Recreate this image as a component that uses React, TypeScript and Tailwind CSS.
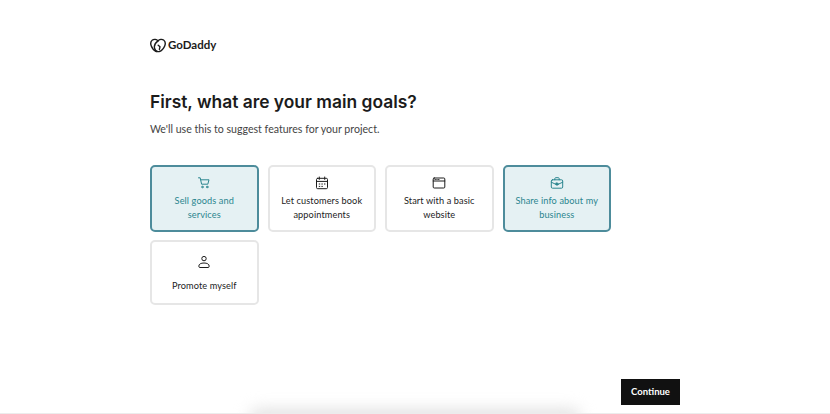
import { ReactNode } from "react";

const CartIcon = () => (
  <svg width="14" height="14" viewBox="0 0 14 14" fill="none" stroke="currentColor" strokeWidth="1" strokeLinecap="round" strokeLinejoin="round">
    <path d="M1.500 1.800h1.700l1.400 6.400h6.200l1.200-4.400H4" />
    <circle cx="5.400" cy="11" r=".8" />
    <circle cx="10.200" cy="11" r=".8" />
  </svg>
);

const CalendarIcon = () => (
  <svg width="14" height="14" viewBox="0 0 14 14" fill="none" stroke="currentColor" strokeWidth="1" strokeLinecap="round">
    <rect x="1.500" y="2.300" width="11" height="10.400" rx="1.200" />
    <path d="M1.500 5.400h11M4.300 1v2.400M9.700 1v2.400" />
    <path d="M4.200 8h.6M6.800 8h.6M9.400 8h.6M4.200 10.400h.6M6.800 10.400h.6" />
  </svg>
);

const BrowserIcon = () => (
  <svg width="14" height="14" viewBox="0 0 14 14" fill="none" stroke="currentColor" strokeWidth="1" strokeLinecap="round">
    <rect x="1.200" y="2" width="11.600" height="10" rx="1" />
    <path d="M1.200 5h11.600" />
    <path d="M3 3.500h.4M4.800 3.500h.4M6.600 3.500h.4" />
  </svg>
);

const BriefcaseIcon = () => (
  <svg width="14" height="14" viewBox="0 0 14 14" fill="none" stroke="currentColor" strokeWidth="1" strokeLinecap="round" strokeLinejoin="round">
    <rect x="1.300" y="3.800" width="11.400" height="8.400" rx="1.200" />
    <path d="M4.800 3.800V2.600c0-.5.4-.9.9-.9h2.600c.5 0 .9.4.9.9v1.200" />
    <path d="M1.300 6.200 5.600 8.200M12.700 6.200 8.400 8.200" />
    <rect x="5.800" y="7.200" width="2.400" height="1.800" rx=".4" fill="currentColor" />
  </svg>
);

const PersonIcon = () => (
  <svg width="14" height="14" viewBox="0 0 14 14" fill="none" stroke="currentColor" strokeWidth="1" strokeLinejoin="round">
    <circle cx="7" cy="3.600" r="2.200" />
    <path d="M1.800 11.200c0-2.200 2.200-3.200 5.200-3.200s5.200 1 5.200 3.200c0 .9-.5 1.300-1.200 1.300H3c-.7 0-1.200-.4-1.200-1.300Z" />
  </svg>
);

const GoDaddyMark = () => (
  <svg width="16" height="15" viewBox="0 0 16 14" fill="none" stroke="#1b1b1b" strokeWidth="1.400" strokeLinecap="round" strokeLinejoin="round">
    <path d="M8 2.400C6.600.8 4 .4 2.400 1.500.7 2.700.4 5.100 1.300 7.400c.9 2.400 2.800 4.700 5 5.600" />
    <path d="M8 2.400c1.400-1.600 4-2 5.600-.9 1.700 1.200 2 3.600 1.100 5.900-1 2.500-3.100 4.800-5.500 5.600-2.400.5-4.200-1.100-4.700-3.500C4 7.200 5.600 4.200 8 2.400Z" />
    <path d="M8.200 6.700l1.800 1.500-.6 2.600" />
  </svg>
);

function GoalCard({ icon, children, selected, single }: { icon: ReactNode; children: ReactNode; selected?: boolean; single?: boolean }) {
  return (
    <button
      className={
        selected
          ? "flex h-full flex-col items-center rounded-[5px] border-2 border-[#4d8c9b] bg-[#e5f1f3] px-2 pt-[9px] text-[#2b868f]"
          : single
            ? "flex h-full flex-col items-center rounded-[5px] border-2 border-[#e6e6e6] bg-white px-2 pt-[12.500px] text-[#1d1d1d]"
            : "flex h-full flex-col items-center rounded-[5px] border-2 border-[#e6e6e6] bg-white px-2 pt-[9px] text-[#1d1d1d]"
      }
    >
      {icon}
      <span className={single ? "mt-[10px] text-[9.200px] leading-[14px] tracking-[0.1px]" : "mt-[4px] text-[9.200px] leading-[14px] tracking-[0.1px]"}>{children}</span>
    </button>
  );
}

export default function App() {
  return (
    <div className="relative flex h-[414px] w-[830px] flex-col overflow-hidden bg-white pl-[150px] font-['Lato','Noto_Sans',sans-serif]">
      {/* Logo */}
      <div className="mt-[37px] flex h-[16px] items-center gap-[2px]">
        <GoDaddyMark />
        <span className="text-[11.500px] font-bold text-[#1b1b1b]">GoDaddy</span>
      </div>

      <h1 className="mt-[37px] font-['Inter',sans-serif] text-[17.400px] leading-[24px] font-semibold text-[#1b1b1b]">First, what are your main goals?</h1>
      <p className="mt-[8px] text-[10.600px] leading-[14px] text-[#444444]">We'll use this to suggest features for your project.</p>

      <div className="mt-[29px] grid w-[461px] grid-cols-4 grid-rows-[67px_65px] gap-x-[9px] gap-y-[8px]">
        <GoalCard icon={<CartIcon />} selected>Sell goods and services</GoalCard>
        <GoalCard icon={<CalendarIcon />}>Let customers book appointments</GoalCard>
        <GoalCard icon={<BrowserIcon />}>Start with a basic website</GoalCard>
        <GoalCard icon={<BriefcaseIcon />} selected>Share info about my business</GoalCard>
        <GoalCard icon={<PersonIcon />} single>Promote myself</GoalCard>
      </div>

      <button className="absolute top-[379px] left-[621px] h-[26px] w-[59px] bg-[#111111] text-[9.500px] font-bold text-white">Continue</button>

      {/* soft shadow along the bottom edge */}
      <div className="absolute -bottom-[10px] left-[250px] h-[14px] w-[330px] rounded-full bg-[#dcdcdc] blur-[8px]" />
      <div className="absolute bottom-0 left-0 h-px w-full bg-[#ececec]" />
    </div>
  );
}
